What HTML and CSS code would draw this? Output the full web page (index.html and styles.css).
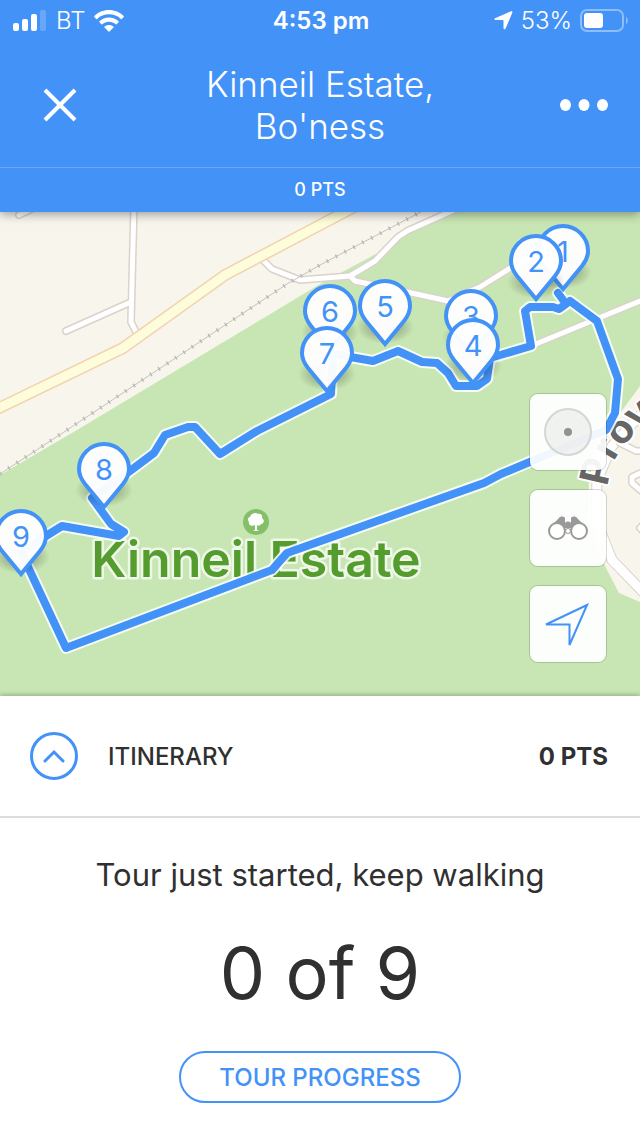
FILE: index.html
```html
<!DOCTYPE html>
<html lang="en">
<head>
    <meta charset="UTF-8">
    <meta name="viewport" content="width=device-width, initial-scale=1.0">
    <title>Kinneil Estate, Bo'ness</title>
    <link rel="stylesheet" href="styles.css">
</head>
<body>
    <header class="header">
        <div class="status-bar">
            <div class="status-left">
                <svg class="signal" width="34" height="22" viewBox="0 0 34 22" fill="#fff">
                    <rect x="0" y="13" width="6" height="8" rx="2"/>
                    <rect x="9" y="9" width="6" height="12" rx="2"/>
                    <rect x="18" y="4" width="6" height="17" rx="2"/>
                    <rect x="27" y="0" width="6" height="21" rx="2" opacity="0.2"/>
                </svg>
                <span>BT</span>
                <svg class="wifi" width="30" height="22" viewBox="0 0 30 22" fill="#fff">
                    <path d="M15 0C9.200 0 4 2.300 0.300 6C0 6.300 0 6.700 0.300 7L2.200 8.900C2.500 9.200 2.900 9.200 3.200 8.900C6.200 5.900 10.400 4.300 15 4.300S23.800 5.900 26.800 8.900C27.100 9.200 27.500 9.200 27.800 8.900L29.700 7C30 6.700 30 6.300 29.700 6C26 2.300 20.800 0 15 0Z"/>
                    <path d="M15 7.600C11.300 7.600 7.900 9 5.400 11.300C5.100 11.600 5.100 12 5.400 12.300L7.400 14.200C7.700 14.500 8 14.500 8.300 14.200C10.100 12.600 12.400 11.700 15 11.700S19.900 12.600 21.700 14.200C22 14.500 22.300 14.500 22.600 14.200L24.600 12.300C24.900 12 24.900 11.600 24.600 11.300C22.100 9 18.700 7.600 15 7.600Z"/>
                    <path d="M15 15C13.200 15 11.700 15.600 10.500 16.500C10.200 16.800 10.200 17.200 10.500 17.500L14.500 21.600C14.800 21.900 15.200 21.900 15.500 21.600L19.500 17.500C19.800 17.200 19.800 16.800 19.500 16.500C18.300 15.600 16.800 15 15 15Z"/>
                </svg>
            </div>
            <span class="time">4:53 pm</span>
            <div class="status-right">
                <svg width="19" height="19" viewBox="0 0 19 19" fill="#fff">
                    <path d="M17 0.300L1 7.200C0 7.700 0.200 9 1.200 9H8.700C9.200 9 9.500 9.300 9.500 9.800V17C9.500 18.500 11 18.600 11.600 17.600L18.300 1.800C18.700 0.800 18 0 17 0.300Z"/>
                </svg>
                <span>53%</span>
                <svg width="49" height="24" viewBox="0 0 49 24">
                    <rect x="1" y="1" width="42" height="21" rx="6" fill="none" stroke="#fff" stroke-opacity="0.4" stroke-width="2"/>
                    <rect x="4" y="4" width="19" height="15" rx="3" fill="#fff"/>
                    <path d="M46 8C48.600 9 48.600 14 46 15Z" fill="#fff" fill-opacity="0.4"/>
                </svg>
            </div>
        </div>
        <div class="title-bar">
            <button class="icon-btn" aria-label="Close">
                <svg width="34" height="34" viewBox="0 0 34 34" fill="none" stroke="#fff" stroke-width="4">
                    <path d="M2 2L32 32M32 2L2 32"/>
                </svg>
            </button>
            <h1 class="title">Kinneil Estate, Bo'ness</h1>
            <button class="icon-btn more-btn" aria-label="More">
                <svg width="48" height="12" viewBox="0 0 48 12" fill="#fff">
                    <ellipse cx="5.500" cy="6" rx="5.500" ry="6"/>
                    <ellipse cx="24" cy="6" rx="5.500" ry="6"/>
                    <ellipse cx="42.500" cy="6" rx="5.500" ry="6"/>
                </svg>
            </button>
        </div>
        <div class="points-bar">0 PTS</div>
    </header>

    <main class="map">
        <svg class="map-canvas" viewBox="0 212 640 484" preserveAspectRatio="xMidYMid slice">
            <defs>
                <path id="pin" d="M0 -3L-19 -26C-23 -31 -25 -36 -25 -41A25 25 0 0 1 25 -41C25 -36 23 -31 19 -26Z"/>
                <radialGradient id="pin-shadow">
                    <stop offset="0.500" stop-color="#000" stop-opacity="0.200"/>
                    <stop offset="1" stop-color="#000" stop-opacity="0"/>
                </radialGradient>
                <path id="street" d="M608 487C609 469 615 456 626 443C638 430 652 419 680 395"/>
            </defs>

            <!-- land -->
            <rect y="205" width="640" height="500" fill="#f8f5ed"/>
            <path d="M0 475L77 430L320 284L387 248L405 230L455 205H640V705H0Z" fill="#c8e6b3"/>
            <path d="M640 386L632 397L600 440L589 478L588 520L605 566L619 593L640 602Z" fill="#f8f5ed"/>

            <!-- roads -->
            <g class="road-edge">
                <path d="M19 215L40 205M134 205L131 322L137 334M66 331L131 302"/>
                <path d="M262 259L272 269L300 280L350 276L375 261L398 237L407 231L465 205"/>
                <path d="M350 276L355 281L407 292L448 301L480 287L560 237M531 346L640 301"/>
            </g>
            <g class="road">
                <path d="M19 215L40 205M134 205L131 322L137 334M66 331L131 302"/>
                <path d="M262 259L272 269L300 280L350 276L375 261L398 237L407 231L465 205"/>
                <path d="M350 276L355 281L407 292L448 301L480 287L560 237M531 346L640 301"/>
            </g>
            <path class="road-edge wide" d="M645 594L612 560L596 520L597 480L612 446L645 410"/>
            <path class="road wide" d="M645 594L612 560L596 520L597 480L612 446L645 410"/>
            <path class="road-edge" d="M620 443L636 451H645M645 471L632 477L632 483L645 494M645 523L640 528L645 533"/>
            <path class="road" d="M620 443L636 451H645M645 471L632 477L632 483L645 494M645 523L640 528L645 533"/>
            <path d="M-5 410L123 348L225 275L320 225L358 205" fill="none" stroke="#f3d3ad" stroke-width="12"/>
            <path d="M-5 410L123 348L225 275L320 225L358 205" fill="none" stroke="#fdfcdb" stroke-width="9"/>
            <path d="M0 474L67 430L287 284L320 265L434 205" fill="none" stroke="#c4c2be" stroke-width="1"/>
            <path d="M0 474L67 430L287 284L320 265L434 205" fill="none" stroke="#bab8b6" stroke-width="4" stroke-dasharray="1.500 8.500"/>

            <!-- labels -->
            <circle cx="256" cy="522" r="13" fill="#85bf68"/>
            <path d="M255 530L255 525C252 527 248 525 249 522C247 520 248 517 250 517C251 513 256 512 258 514C261 513 263 516 262 518C265 520 264 524 261 524C260 526 258 526 257 525L257 530L259 531H253Z" fill="#fff"/>
            <text class="park-label" x="256" y="577">Kinneil Estate</text>
            <text class="street-label"><textPath href="#street">Prov</textPath></text>

            <!-- tour route -->
            <g fill="none" stroke-linejoin="round" stroke-linecap="round">
                <path class="route-edge" d="M558 293L566 304L559 309L553 307L530 307L525 311L531 346L490 358L487 379L477 386L456 386L448 373L437 363L422 362L398 351L373 361L333 354L331 394L257 431L220 454L195 427L188 427L165 435L154 453L130 471L92 498L111 524L124 532L119 536L62 526L46 536L21 552L66 648L272 570L287 553L484 483L501 474L606 430L615 413L618 379L597 321L570 301"/>
                <path class="route" d="M558 293L566 304L559 309L553 307L530 307L525 311L531 346L490 358L487 379L477 386L456 386L448 373L437 363L422 362L398 351L373 361L333 354L331 394L257 431L220 454L195 427L188 427L165 435L154 453L130 471L92 498L111 524L124 532L119 536L62 526L46 536L21 552L66 648L272 570L287 553L484 483L501 474L606 430L615 413L618 379L597 321L570 301"/>
            </g>

            <!-- tour stops -->
            <g class="stop" transform="translate(563 292)"><ellipse cy="-20" rx="29" ry="17"/><use href="#pin"/><text y="-30">1</text></g>
            <g class="stop" transform="translate(536 302)"><ellipse cy="-20" rx="29" ry="17"/><use href="#pin"/><text y="-30">2</text></g>
            <g class="stop" transform="translate(471 357)"><ellipse cy="-20" rx="29" ry="17"/><use href="#pin"/><text y="-30">3</text></g>
            <g class="stop" transform="translate(473 386)"><ellipse cy="-20" rx="29" ry="17"/><use href="#pin"/><text y="-30">4</text></g>
            <g class="stop" transform="translate(385 347)"><ellipse cy="-20" rx="29" ry="17"/><use href="#pin"/><text y="-30">5</text></g>
            <g class="stop" transform="translate(330 352)"><ellipse cy="-20" rx="29" ry="17"/><use href="#pin"/><text y="-30">6</text></g>
            <g class="stop" transform="translate(327 394)"><ellipse cy="-20" rx="29" ry="17"/><use href="#pin"/><text y="-30">7</text></g>
            <g class="stop" transform="translate(104 510)"><ellipse cy="-20" rx="29" ry="17"/><use href="#pin"/><text y="-30">8</text></g>
            <g class="stop" transform="translate(21 577)"><ellipse cy="-20" rx="29" ry="17"/><use href="#pin"/><text y="-30">9</text></g>
        </svg>

        <div class="map-controls">
            <button class="map-btn" aria-label="Centre map">
                <svg width="48" height="48" viewBox="0 0 48 48">
                    <circle cx="24" cy="24" r="23" fill="#e8eae8" fill-opacity="0.600" stroke="#d4d6d4" stroke-width="2"/>
                    <circle cx="24" cy="24" r="4" fill="#929292"/>
                </svg>
            </button>
            <button class="map-btn" aria-label="Explore">
                <svg width="40" height="24" viewBox="0 0 40 24" fill="#999">
                    <path d="M2 11L8 5L11 2C12 0 16 0 17 2V7C18 5 22 5 23 7V2C24 0 28 0 29 2L32 5L38 11L30 15L23 12H17L10 15Z"/>
                    <circle cx="9" cy="15" r="8" fill="#fff" stroke="#999" stroke-width="2"/>
                    <circle cx="31" cy="15" r="8" fill="#fff" stroke="#999" stroke-width="2"/>
                    <circle cx="20" cy="15" r="2.500" fill="#fff" stroke="#999"/>
                </svg>
            </button>
            <button class="map-btn" aria-label="My location">
                <svg width="46" height="46" viewBox="0 0 46 46" fill="none" stroke="#4392f7" stroke-width="2">
                    <path d="M42 4L1 23.500H24.500V44Z"/>
                </svg>
            </button>
        </div>
    </main>

    <section class="itinerary">
        <button class="expand-btn" aria-label="Show itinerary">
            <svg width="24" height="14" viewBox="0 0 24 14" fill="none" stroke="#4392f7" stroke-width="3" stroke-linecap="round">
                <path d="M3 12L12 3L21 12"/>
            </svg>
        </button>
        <h2 class="itinerary-title">ITINERARY</h2>
        <strong class="itinerary-points">0 PTS</strong>
    </section>

    <section class="progress">
        <p class="progress-text">Tour just started, keep walking</p>
        <p class="progress-count">0 of 9</p>
        <button class="progress-btn">TOUR PROGRESS</button>
    </section>
</body>
</html>
```
FILE: styles.css
```css
* {
    box-sizing: border-box;
}

body {
    display: flex;
    flex-direction: column;
    min-height: 100vh;
    margin: 0;
    background-color: #fff;
    color: #303030;
    font-family: Inter, "Liberation Sans", sans-serif;
}

button {
    display: flex;
    align-items: center;
    justify-content: center;
    padding: 0;
    border: none;
    background: none;
    font-family: inherit;
    cursor: pointer;
}

.header {
    position: relative;
    z-index: 1;
    background-color: #4392f7;
    color: #fff;
    box-shadow: 0 2px 10px rgba(0, 0, 0, 0.4);
}

.status-bar {
    display: grid;
    grid-template-columns: 1fr auto 1fr;
    align-items: center;
    height: 41px;
    padding: 0 11px 0 13px;
    font-size: 24px;
}

.status-left,
.status-right {
    display: flex;
    align-items: center;
    gap: 8px;
    font-weight: 300;
}

.status-left {
    gap: 9px;
}

.status-right {
    justify-content: flex-end;
}

.time {
    font-weight: 600;
}

.title-bar {
    display: grid;
    grid-template-columns: 1fr 240px 1fr;
    align-items: center;
    padding: 22px 32px 20px;
}

.icon-btn {
    width: 56px;
    height: 56px;
}

.more-btn {
    justify-self: end;
    width: 48px;
}

.title {
    margin: 0;
    font-size: 35px;
    font-weight: 300;
    line-height: 42px;
    text-align: center;
}

.points-bar {
    padding: 11px 0;
    border-top: 1px solid #68a8f9;
    font-size: 18px;
    font-weight: 500;
    line-height: 22px;
    text-align: center;
}

.map {
    position: relative;
    display: flex;
    flex: 1;
    min-height: 320px;
}

.map-canvas {
    flex: 1;
    width: 100%;
    height: auto;
}

.road,
.road-edge {
    fill: none;
    stroke: #fff;
    stroke-width: 5;
    stroke-linecap: round;
    stroke-linejoin: round;
}

.road-edge {
    stroke: #d9d3cb;
    stroke-width: 8;
}

.road.wide {
    stroke-width: 9;
}

.road-edge.wide {
    stroke-width: 11;
}

.route {
    stroke: #4392f7;
    stroke-width: 8;
}

.route-edge {
    stroke: #fff;
    stroke-opacity: 0.85;
    stroke-width: 12;
}

.park-label {
    fill: #559c2f;
    stroke: #eef7e8;
    stroke-width: 5;
    stroke-linejoin: round;
    paint-order: stroke;
    font-size: 50px;
    font-weight: 600;
    text-anchor: middle;
}

.street-label {
    fill: #666;
    stroke: #fff;
    stroke-width: 4;
    stroke-linejoin: round;
    paint-order: stroke;
    font-size: 40px;
    font-weight: 700;
}

.stop use {
    fill: #fff;
    fill-opacity: 0.96;
    stroke: #4392f7;
    stroke-width: 4;
}

.stop ellipse {
    fill: url(#pin-shadow);
}

.stop text {
    fill: #4392f7;
    font-size: 29px;
    text-anchor: middle;
}

.map-controls {
    position: absolute;
    right: 33px;
    bottom: 33px;
    display: flex;
    flex-direction: column;
    gap: 18px;
}

.map-btn {
    width: 78px;
    height: 78px;
    border: 1px solid rgba(0, 0, 0, 0.15);
    border-radius: 9px;
    background-color: rgba(255, 255, 255, 0.93);
    background-clip: padding-box;
}

.itinerary {
    position: relative;
    display: flex;
    align-items: center;
    gap: 30px;
    height: 122px;
    padding: 0 32px 0 30px;
    border-bottom: 2px solid #ddd;
    background-color: #fff;
    box-shadow: 0 -2px 4px rgba(0, 0, 0, 0.2);
}

.expand-btn {
    width: 48px;
    height: 48px;
    border: 3px solid #4392f7;
    border-radius: 50%;
}

.itinerary-title {
    flex: 1;
    margin: 0;
    font-size: 24px;
    font-weight: 500;
}

.itinerary-points {
    font-size: 24px;
    font-weight: 700;
}

.progress {
    position: relative;
    display: flex;
    flex-direction: column;
    align-items: center;
    padding: 38px 20px 33px;
    background-color: #fff;
}

.progress-text {
    margin: 0;
    font-size: 31px;
    line-height: 38px;
    text-align: center;
}

.progress-count {
    margin: 32px 0;
    font-size: 72px;
    line-height: 93px;
}

.progress-btn {
    padding: 0 38px;
    height: 52px;
    border: 2px solid #4392f7;
    border-radius: 26px;
    color: #4392f7;
    font-size: 24px;
    font-weight: 500;
}
```
